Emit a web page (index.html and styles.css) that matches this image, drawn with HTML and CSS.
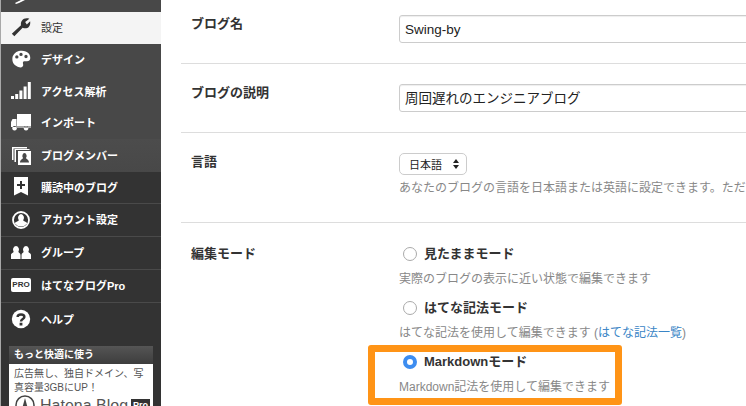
FILE: index.html
```html
<!DOCTYPE html>
<html lang="ja">

<head>
    <meta charset="UTF-8">
    <title>設定</title>
    <link rel="stylesheet" href="styles.css">
</head>

<body>
    <div id="page">
        <!-- side menu -->
        <div id="sidebar">
            <div class="item cut">
                <svg class="icon-cut" viewBox="0 0 20 12"><path fill="#fff" d="M4 3 10 0H14L8 3 5 4Z"/></svg>
            </div>
            <div class="item active">
                <svg class="icon" viewBox="0 0 24 24"><path fill="#333" d="M4 23 1 20 12 10C11 5 15 0 22 2L17 6 19 9 23 5C24 12 19 15 14 13Z"/></svg>
                <span>設定</span>
            </div>
            <div class="item">
                <svg class="icon" viewBox="0 0 24 24"><path fill="#fff" fill-rule="evenodd" d="M13 2C20 2 24 7 23 12 22 16 17 14 15 15 13 17 16 19 14 21 12 23 9 22 6 20 2 18 1 13 2 9 4 4 8 2 13 2ZM7 7.500A2 2 0 1 0 7 11.500 2 2 0 1 0 7 7.500ZM12 4.500A2 2 0 1 0 12 8.500 2 2 0 1 0 12 4.500ZM18 7A2 2 0 1 0 18 11 2 2 0 1 0 18 7Z"/></svg>
                <span>デザイン</span>
            </div>
            <div class="item short">
                <svg class="icon" viewBox="0 0 20 20"><path fill="#fff" d="M0 15h3v3H0ZM4.200 13h3v5h-3ZM8.400 9.500h3V18h-3ZM12.600 5.500h3V18h-3ZM16.800 1h3v17h-3Z"/></svg>
                <span>アクセス解析</span>
            </div>
            <div class="item">
                <svg class="icon" viewBox="0 0 20 20"><path fill="#fff" d="M6 2h14v12H6ZM1.500 7H5.500v8H0V10ZM3.500 14a2.300 2.300 0 1 0 .1 0ZM15 14a2.300 2.300 0 1 0 .1 0ZM6 14.500h14V15.500H6Z"/></svg>
                <span>インポート</span>
            </div>
            <div class="item last-light">
                <svg class="icon" viewBox="0 0 20 20"><path fill="#fff" fill-rule="evenodd" d="M1 2h15v1.500H2.500V15H1ZM3.500 4h15v1H5v12H3.500ZM7 6h13v14H7ZM13.500 8a2.500 3 0 0 0-1.500 5c0 1-3 1.500-3 4.500h9c0-3-3-3.500-3-4.500a2.500 3 0 0 0-1.500-5Z"/></svg>
                <span>ブログメンバー</span>
            </div>
            <div class="item dark first-dark">
                <svg class="icon" viewBox="0 0 20 20"><path fill="#fff" fill-rule="evenodd" d="M3 0h14v18.500l-7-3.500-7 3.500ZM9 4v3H6v2h3v3h2V9h3V7h-3V4Z"/></svg>
                <span>購読中のブログ</span>
            </div>
            <div class="item dark">
                <svg class="icon" viewBox="0 0 20 20"><circle cx="10" cy="11" r="8" fill="none" stroke="#fff" stroke-width="1.800"/><path fill="#fff" d="M10 5a3.200 3.700 0 0 1 2.200 6c0 1.500 3.500 1.500 4 3.500a8 8 0 0 1-12.400 0c.5-2 4-2 4-3.500A3.200 3.700 0 0 1 10 5Z"/></svg>
                <span>アカウント設定</span>
            </div>
            <div class="item dark">
                <svg class="icon" viewBox="0 0 20 20"><path fill="#fff" d="M5 4a3 3.500 0 0 1 2.400 5.500c0 1.500 2.100 1.500 2.100 3.500v4H0v-4c0-2 2.600-2 2.600-3.500A3 3.500 0 0 1 5 4ZM15 4a3 3.500 0 0 1 2.400 5.500c0 1.500 2.600 1.500 2.600 3.500v4H10.500v-4c0-2 2.100-2 2.100-3.500A3 3.500 0 0 1 15 4Z"/></svg>
                <span>グループ</span>
            </div>
            <div class="item dark">
                <b class="pro-icon">PRO</b>
                <span>はてなブログPro</span>
            </div>
            <div class="item dark plain">
                <svg class="icon" viewBox="0 0 24 24"><circle cx="12" cy="12" r="11" fill="#fff"/><path fill="none" stroke="#333" stroke-width="3" d="M8 9.500C8 5.500 16 5.500 16 9.500 16 12 12 12 12 15"/><path fill="#333" d="M10.300 16.500h3.400v3.200h-3.400Z"/></svg>
                <span>ヘルプ</span>
            </div>

            <div id="promo">
                <div class="promo-title">もっと快適に使う</div>
                <div class="promo-body">
                    <p>広告無し、独自ドメイン、写真容量3GBにUP！</p>
                    <div class="promo-logo">
                        <svg class="promo-mark" viewBox="0 0 20 20"><circle cx="10" cy="10" r="9" fill="none" stroke="#444" stroke-width="1.500"/><path fill="#444" d="M10 3 13 14H7Z"/></svg>
                        <span>Hatena Blog</span>
                        <b>Pro</b>
                    </div>
                </div>
            </div>
        </div>

        <!-- settings form -->
        <div id="content">
            <div class="row row-name">
                <div class="label">ブログ名</div>
                <div class="field"><div class="textbox">Swing-by</div></div>
            </div>
            <div class="row row-desc">
                <div class="label">ブログの説明</div>
                <div class="field"><div class="textbox">周回遅れのエンジニアブログ</div></div>
            </div>
            <div class="row row-lang">
                <div class="label">言語</div>
                <div class="field">
                    <div class="select">
                        <span>日本語</span>
                        <svg class="arrows" viewBox="0 0 6 10"><path fill="#222" d="M3 0 6 4H0ZM3 10 0 6H6Z"/></svg>
                    </div>
                    <p class="help">あなたのブログの言語を日本語または英語に設定できます。ただし、一部の機能は日本語のみ</p>
                </div>
            </div>
            <div class="row row-mode">
                <div class="label">編集モード</div>
                <div class="field">
                    <div class="radio-line"><i class="radio"></i><b>見たままモード</b></div>
                    <p class="help">実際のブログの表示に近い状態で編集できます</p>
                    <div class="radio-line"><i class="radio"></i><b>はてな記法モード</b></div>
                    <p class="help">はてな記法を使用して編集できます (<a href="#">はてな記法一覧</a>)</p>
                    <div class="radio-line"><i class="radio on"></i><b>Markdownモード</b></div>
                    <p class="help">Markdown記法を使用して編集できます</p>
                </div>
            </div>
        </div>

        <div id="highlight"></div>
    </div>
</body>

</html>
```

FILE: styles.css
```css
* {
    box-sizing: border-box;
}

html, body {
    margin: 0;
    height: 100%;
    overflow: hidden;
    background-color: white;
}

body {
    font-family: "Liberation Sans", "Noto Sans CJK JP", sans-serif;
    color: #333;
}

p {
    margin: 0;
}

#page {
    position: relative;
    display: flex;
    width: 746px;
    height: 406px;
    overflow: hidden;
}

/* side menu */
#sidebar {
    flex: none;
    width: 161px;
    height: 406px;
    background-color: #333;
    border-left: 1px solid #a8a8a8;
    overflow: hidden;
}

.item {
    display: flex;
    align-items: center;
    height: 32px;
    padding-left: 10px;
    padding-bottom: 2px;
    background-color: #484848;
    color: white;
    font-size: 11px;
    font-weight: bold;
}

.item.cut {
    height: 12px;
    padding-bottom: 0;
    align-items: flex-start;
}

.icon-cut {
    width: 20px;
    height: 12px;
}

.item.active {
    background-color: #f4f4f4;
    color: #333;
    font-weight: normal;
}

.item.short {
    height: 31px;
}

.item.last-light {
    height: 33px;
    background-image: linear-gradient(#4c4c4c, #484848);
}

.item.dark {
    height: 33px;
    background-color: #333;
    border-bottom: 1px solid #4a4a4a;
}

.item.first-dark {
    height: 32px;
}

.item.dark.plain {
    border-bottom: none;
}

.icon {
    flex: none;
    width: 20px;
    height: 20px;
    margin-right: 10px;
}

.pro-icon {
    flex: none;
    width: 20px;
    height: 14px;
    margin-right: 10px;
    border-radius: 2px;
    background-color: white;
    color: #333;
    font-size: 8px;
    line-height: 14px;
    text-align: center;
}

#promo {
    width: 144px;
    margin: 10px 0 0 8px;
}

.promo-title {
    height: 18px;
    padding-left: 5px;
    background-image: linear-gradient(#555, #3d3d3d);
    color: white;
    font-size: 10px;
    font-weight: bold;
    line-height: 18px;
}

.promo-body {
    padding: 3px 5px 0;
    background-color: white;
    color: #555;
    font-size: 10px;
    line-height: 14px;
}

.promo-logo {
    display: flex;
    align-items: flex-start;
    padding-left: 1px;
    font-size: 16px;
    line-height: 20px;
    white-space: nowrap;
}

.promo-mark {
    flex: none;
    width: 20px;
    height: 20px;
    margin-right: 5px;
}

.promo-logo span {
    padding-top: 1px;
}

.promo-logo b {
    margin: 4px 0 0 3px;
    padding: 0 2px;
    background-color: #333;
    color: white;
    font-size: 9px;
    line-height: 12px;
}

/* settings form */
#content {
    flex: none;
    width: 565px;
    margin-left: 20px;
}

.row {
    display: flex;
    border-bottom: 1px solid #ddd;
}

.row-name {
    height: 64px;
    padding-top: 15px;
}

.row-desc {
    height: 69px;
    padding-top: 20px;
}

.row-lang {
    height: 90px;
    padding-top: 20px;
}

.row-mode {
    border-bottom: none;
    padding-top: 22px;
}

.label {
    flex: none;
    width: 218px;
    padding-left: 10px;
    font-size: 13px;
    font-weight: bold;
    line-height: 18px;
}

.field {
    flex: none;
    width: 347px;
    white-space: nowrap;
    overflow: hidden;
}

.row-mode .field {
    margin-top: -3px;
}

.textbox {
    width: 400px;
    height: 28px;
    padding-left: 5px;
    border: 1px solid #ccc;
    border-radius: 3px;
    box-shadow: inset 0 1px 1px #eee;
    color: #222;
    font-size: 13.500px;
    line-height: 27px;
}

.select {
    display: flex;
    align-items: center;
    justify-content: space-between;
    width: 68px;
    height: 22px;
    padding: 0 7px 0 9px;
    border: 1px solid #ccc;
    border-radius: 5px;
    color: #222;
    font-size: 11px;
}

.arrows {
    width: 6px;
    height: 10px;
}

.help {
    margin-top: 5px;
    color: #888;
    font-size: 12px;
    line-height: 17px;
}

.help a {
    color: #3a85c6;
    text-decoration: none;
}

.radio-line {
    display: flex;
    align-items: center;
    height: 20px;
    padding-left: 4px;
    color: #333;
    font-size: 13px;
}

.row-mode .help {
    margin-top: 9px;
    margin-bottom: 8px;
}

.radio {
    flex: none;
    width: 14px;
    height: 14px;
    margin: 4px 7px 0 0;
    border: 1px solid #aaa;
    border-radius: 50%;
    background-color: white;
}

.radio.on {
    border: 4.500px solid #3d8df0;
}

/* orange callout drawn on top of the screenshot */
#highlight {
    position: absolute;
    left: 368px;
    top: 345px;
    width: 254px;
    height: 60px;
    border: 7px solid #ff9416;
    border-radius: 3px;
}
```
